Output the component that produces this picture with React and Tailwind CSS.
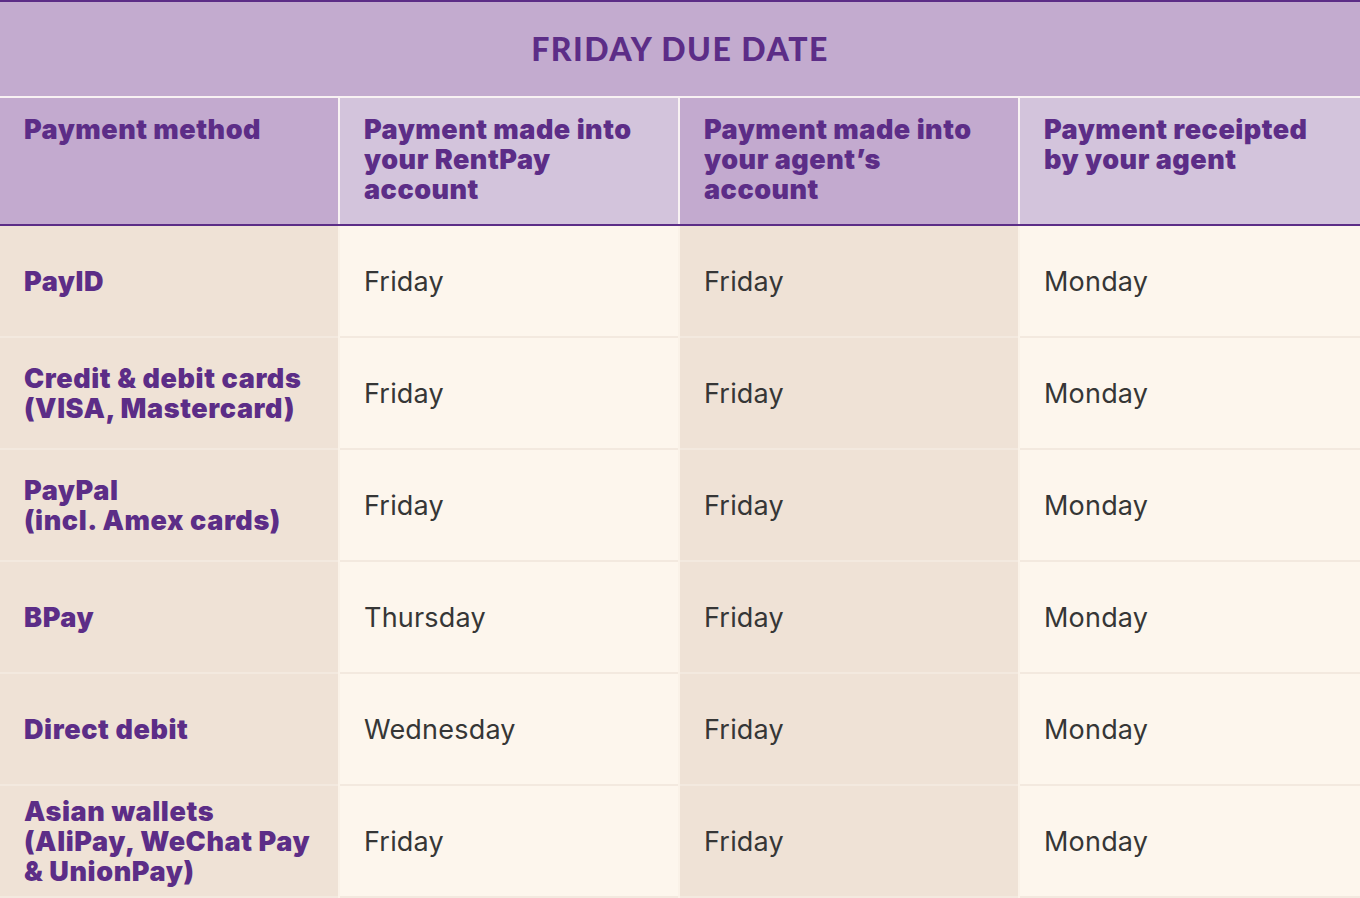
import React from "react";

const rows = [
  { method: ["PayID"], rentpay: "Friday", agent: "Friday", receipted: "Monday" },
  { method: ["Credit & debit cards", "(VISA, Mastercard)"], rentpay: "Friday", agent: "Friday", receipted: "Monday" },
  { method: ["PayPal", "(incl. Amex cards)"], rentpay: "Friday", agent: "Friday", receipted: "Monday" },
  { method: ["BPay"], rentpay: "Thursday", agent: "Friday", receipted: "Monday" },
  { method: ["Direct debit"], rentpay: "Wednesday", agent: "Friday", receipted: "Monday" },
  { method: ["Asian wallets", "(AliPay, WeChat Pay", "& UnionPay)"], rentpay: "Friday", agent: "Friday", receipted: "Monday" },
];

const headers = [
  ["Payment method"],
  ["Payment made into", "your RentPay", "account"],
  ["Payment made into", "your agent’s", "account"],
  ["Payment receipted", "by your agent"],
];

const title = { fontFamily: "Lato, 'Noto Sans', sans-serif" };
const heavy = { fontFamily: "Inter, 'Noto Sans', sans-serif" };

export default function App() {
  return (
    <div className="w-[1360px] h-[898px] bg-[#fdf6ed] overflow-hidden">
      <div className="border-t-2 border-[#5c2d87] bg-[#c3abcf] h-[96px] flex items-center justify-center">
        <h1
          className="text-[32px] font-black tracking-[1.5px] text-[#5c2d87] leading-none"
          style={title}
        >
          FRIDAY DUE DATE
        </h1>
      </div>
      <div className="border-t-2 border-[#f8f2f3] grid grid-cols-[338px_338px_338px_1fr] gap-x-[2px] bg-[#f8f2f3] border-b-2 border-b-[#5c2d87]">
        {headers.map((lines, i) => (
          <div
            key={i}
            className={`h-[126px] pl-6 pt-[17px] ${i % 2 === 0 ? "bg-[#c3aacf]" : "bg-[#d3c4dc]"}`}
          >
            <div
              className="text-[27px] font-black leading-[30px] tracking-[0.5px] text-[#5c2d87]"
              style={heavy}
            >
              {lines.map((l) => (
                <div key={l}>{l}</div>
              ))}
            </div>
          </div>
        ))}
      </div>
      <div className="grid grid-cols-[338px_338px_338px_1fr] gap-x-[2px] bg-[#faf2e8]">
        {rows.map((r, ri) => (
          <React.Fragment key={ri}>
            <div className="h-[112px] border-b-2 border-[#f3e9df] bg-[#efe2d6] pl-6 pt-[2px] flex items-center">
              <div
                className="text-[27px] font-black leading-[30px] tracking-[0.6px] text-[#5c2d87]"
                style={heavy}
              >
                {r.method.map((l) => (
                  <div key={l}>{l}</div>
                ))}
              </div>
            </div>
            <div className="h-[112px] border-b-2 border-[#f3e9df] bg-[#fdf6ed] pl-6 pt-[2px] flex items-center">
              <span className="text-[27px] tracking-[0.2px] text-[#363636]" style={heavy}>{r.rentpay}</span>
            </div>
            <div className="h-[112px] border-b-2 border-[#f3e9df] bg-[#efe2d6] pl-6 pt-[2px] flex items-center">
              <span className="text-[27px] tracking-[0.2px] text-[#363636]" style={heavy}>{r.agent}</span>
            </div>
            <div className="h-[112px] border-b-2 border-[#f3e9df] bg-[#fdf6ed] pl-6 pt-[2px] flex items-center">
              <span className="text-[27px] tracking-[0.2px] text-[#363636]" style={heavy}>{r.receipted}</span>
            </div>
          </React.Fragment>
        ))}
      </div>
    </div>
  );
}
